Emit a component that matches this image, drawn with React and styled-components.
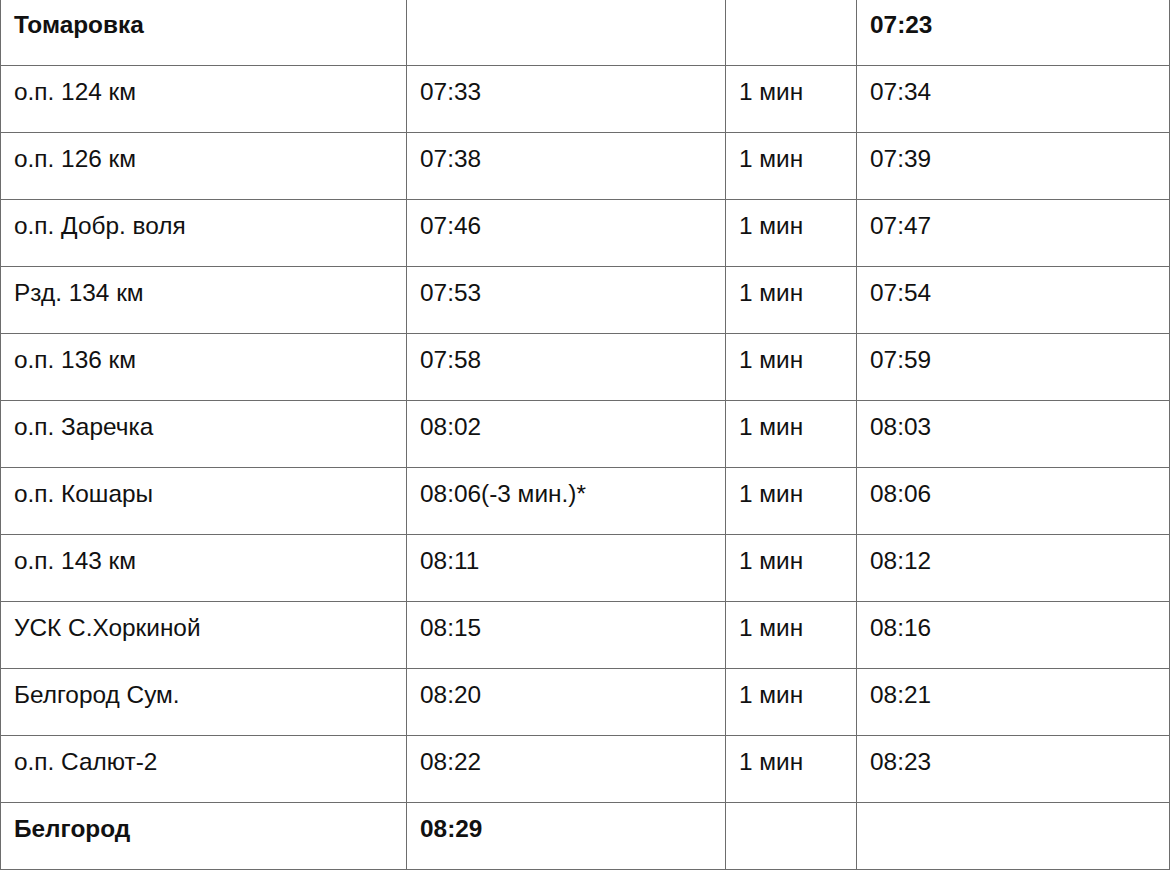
import React from "react";
import styled, { createGlobalStyle } from "styled-components";

const Global = createGlobalStyle`
    body {
        margin: 0;
        background: #fff;
        font-family: "Liberation Sans", Arial, sans-serif;
        color: #111;
    }
`

const Table = styled.table`
    border-collapse: collapse;
    table-layout: fixed;
    width: 1169px;
    margin-top: -2px;
`

const Col = styled.col`
    width: ${p => p.w}px;
`

const Row = styled.tr`
    height: 67px;
`

const Cell = styled.td`
    border: 1px solid #6d6d6d;
    padding: 12px 13px 0;
    vertical-align: top;
    font-size: 24.4px;
    line-height: 28px;
    font-weight: ${p => (p.bold ? 700 : 400)};
    white-space: nowrap;
`

const stops = [
    ["Томаровка", "", "", "07:23", true],
    ["о.п. 124 км", "07:33", "1 мин", "07:34"],
    ["о.п. 126 км", "07:38", "1 мин", "07:39"],
    ["о.п. Добр. воля", "07:46", "1 мин", "07:47"],
    ["Рзд. 134 км", "07:53", "1 мин", "07:54"],
    ["о.п. 136 км", "07:58", "1 мин", "07:59"],
    ["о.п. Заречка", "08:02", "1 мин", "08:03"],
    ["о.п. Кошары", "08:06(-3 мин.)*", "1 мин", "08:06"],
    ["о.п. 143 км", "08:11", "1 мин", "08:12"],
    ["УСК С.Хоркиной", "08:15", "1 мин", "08:16"],
    ["Белгород Сум.", "08:20", "1 мин", "08:21"],
    ["о.п. Салют-2", "08:22", "1 мин", "08:23"],
    ["Белгород", "08:29", "", "", true],
]

const App = () => {
    return (
        <>
            <Global />
            <Table>
                <colgroup>
                    <Col w={406} />
                    <Col w={319} />
                    <Col w={131} />
                    <Col w={313} />
                </colgroup>
                <tbody>
                    {stops.map(([name, arr, stay, dep, bold]) => (
                        <Row key={name}>
                            <Cell bold={bold}>{name}</Cell>
                            <Cell bold={bold}>{arr}</Cell>
                            <Cell>{stay}</Cell>
                            <Cell bold={bold}>{dep}</Cell>
                        </Row>
                    ))}
                </tbody>
            </Table>
        </>
    )
}

export default App;
